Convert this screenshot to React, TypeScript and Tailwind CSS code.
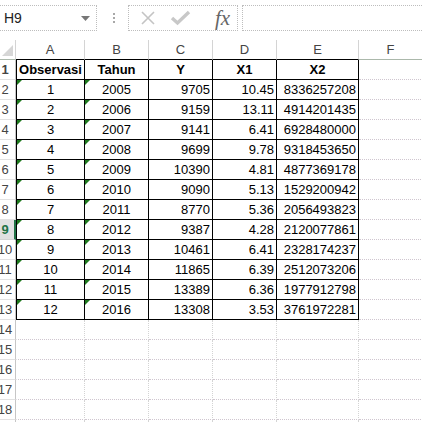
import React from 'react';

const rows = [
    [1, 2005, 9705, '10.45', '8336257208'],
    [2, 2006, 9159, '13.11', '4914201435'],
    [3, 2007, 9141, '6.41', '6928480000'],
    [4, 2008, 9699, '9.78', '9318453650'],
    [5, 2009, 10390, '4.81', '4877369178'],
    [6, 2010, 9090, '5.13', '1529200942'],
    [7, 2011, 8770, '5.36', '2056493823'],
    [8, 2012, 9387, '4.28', '2120077861'],
    [9, 2013, 10461, '6.41', '2328174237'],
    [10, 2014, 11865, '6.39', '2512073206'],
    [11, 2015, 13389, '6.36', '1977912798'],
    [12, 2016, 13308, '3.53', '3761972281'],
];

const Flag = () => (
    <span className="absolute left-0 top-0 w-0 h-0 border-t-[5px] border-r-[5px] border-t-[#1f7a1f] border-r-transparent" />
);

const RowHead = ({ n, selected }: { n: number; selected?: boolean }) => (
    <div
        className={
            selected
                ? 'w-[16px] h-full shrink-0 overflow-hidden border-r-2 border-r-[#217346] bg-[#e1e1e1] border-b border-b-[#d4d4d4]'
                : 'w-[16px] h-full shrink-0 overflow-hidden border-r border-r-[#c6c6c6] border-b border-b-[#e2e2e2]'
        }
    >
        <div
            className={
                selected
                    ? 'w-[26px] -ml-[8px] h-full flex items-center justify-center text-[13px] font-bold text-[#217346]'
                    : 'w-[26px] -ml-[8px] h-full flex items-center justify-center text-[13px] text-[#444]'
            }
        >
            {n}
        </div>
    </div>
);

export default function App() {
    return (
        <div className="w-[422px] h-[422px] overflow-hidden bg-white text-black" style={{ fontFamily: '"Liberation Sans", Arial, sans-serif' }}>
            {/* formula bar */}
            <div className="h-[40px] flex items-start pt-[5px]">
                <div className="-ml-[1px] w-[98px] h-[26px] border border-dotted border-[#bdbdbd] flex items-center justify-between pl-[4px] pr-[6px]">
                    <span className="text-[14px] text-[#222]">H9</span>
                    <svg width="9" height="5" viewBox="0 0 9 5">
                        <polygon points="0,0 9,0 4.5,5" fill="#777" />
                    </svg>
                </div>
                <div className="w-[31px] h-[26px] flex flex-col items-center justify-center gap-[2px] pl-[2px]">
                    <span className="w-[2px] h-[2px] bg-[#a8a8a8]" />
                    <span className="w-[2px] h-[2px] bg-[#a8a8a8]" />
                    <span className="w-[2px] h-[2px] bg-[#a8a8a8]" />
                </div>
                <div className="w-[110px] h-[26px] border border-dotted border-[#bdbdbd] flex items-center pl-[11px] gap-[14px]">
                    <svg width="16" height="16" viewBox="0 0 16 16">
                        <path d="M2 2 L14 14 M14 2 L2 14" stroke="#c4c4c4" strokeWidth="1.6" fill="none" />
                    </svg>
                    <svg width="21" height="16" viewBox="0 0 21 16">
                        <path d="M2 8 L7.5 13 L19 2" stroke="#c8c8c8" strokeWidth="3.4" fill="none" />
                    </svg>
                    <span className="ml-[10px] text-[21px] italic text-[#666] leading-none" style={{ fontFamily: '"Liberation Serif", serif' }}>
                        fx
                    </span>
                </div>
                <div className="ml-[4px] flex-1 -mr-[4px] h-[26px] border border-dotted border-[#bdbdbd]" />
            </div>

            {/* column headers */}
            <div className="h-[20px] flex text-[13px] text-[#444]">
                <div className="w-[16px] shrink-0 border-r border-r-[#d4d4d4] border-b border-b-[#abb8ab] flex items-end justify-end pr-[2px] pb-[3px]">
                    <svg width="11" height="11" viewBox="0 0 11 11">
                        <polygon points="11,0 11,11 0,11" fill="#d6d6d6" />
                    </svg>
                </div>
                <div className="w-[69px] shrink-0 border-r border-r-[#d4d4d4] border-b border-b-black flex items-center justify-center">A</div>
                <div className="w-[64px] shrink-0 border-r border-r-[#d4d4d4] border-b border-b-black flex items-center justify-center">B</div>
                <div className="w-[64px] shrink-0 border-r border-r-[#d4d4d4] border-b border-b-black flex items-center justify-center">C</div>
                <div className="w-[64px] shrink-0 border-r border-r-[#d4d4d4] border-b border-b-black flex items-center justify-center">D</div>
                <div className="w-[82px] shrink-0 border-r border-r-[#d4d4d4] border-b border-b-black flex items-center justify-center">E</div>
                <div className="w-[64px] shrink-0 border-r border-r-[#d4d4d4] border-b border-b-[#abb8ab] flex items-center justify-center">F</div>
            </div>

            {/* row 1 */}
            <div className="h-[20px] flex text-[13px] font-bold">
                <RowHead n={1} />
                <div className="w-[69px] shrink-0 border-l border-r border-b border-black flex items-center justify-center">Observasi</div>
                <div className="w-[64px] shrink-0 border-r border-b border-black flex items-center justify-center">Tahun</div>
                <div className="w-[64px] shrink-0 border-r border-b border-black flex items-center justify-center">Y</div>
                <div className="w-[64px] shrink-0 border-r border-b border-black flex items-center justify-center">X1</div>
                <div className="w-[82px] shrink-0 border-r border-b border-black flex items-center justify-center">X2</div>
                <div className="w-[64px] shrink-0 border-r border-r-[#d4d4d4] border-b border-dotted border-b-[#cfc6cf]" />
            </div>

            {rows.map((r, i) => (
                <div key={i} className="h-[20px] flex text-[13px]">
                    <RowHead n={i + 2} selected={i + 2 === 9} />
                    <div className="relative w-[69px] shrink-0 border-l border-r border-b border-black flex items-center justify-center">
                        <Flag />
                        {r[0]}
                    </div>
                    <div className="relative w-[64px] shrink-0 border-r border-b border-black flex items-center justify-center">
                        <Flag />
                        {r[1]}
                    </div>
                    <div className="w-[64px] shrink-0 border-r border-b border-black flex items-center justify-end pr-[2px]">{r[2]}</div>
                    <div className="w-[64px] shrink-0 border-r border-b border-black flex items-center justify-end pr-[2px]">{r[3]}</div>
                    <div className="w-[82px] shrink-0 border-r border-b border-black flex items-center justify-end pr-[2px]">{r[4]}</div>
                    <div className="w-[64px] shrink-0 border-r border-r-[#d4d4d4] border-b border-dotted border-b-[#cfc6cf]" />
                </div>
            ))}

            {[14, 15, 16, 17, 18, 19].map((n) => (
                <div key={n} className="h-[20px] flex">
                    <RowHead n={n} />
                    <div className="w-[69px] shrink-0 border-l border-l-transparent border-r border-r-[#d4d4d4] border-b border-dotted border-b-[#cfc6cf]" />
                    <div className="w-[64px] shrink-0 border-r border-r-[#d4d4d4] border-b border-dotted border-b-[#cfc6cf]" />
                    <div className="w-[64px] shrink-0 border-r border-r-[#d4d4d4] border-b border-dotted border-b-[#cfc6cf]" />
                    <div className="w-[64px] shrink-0 border-r border-r-[#d4d4d4] border-b border-dotted border-b-[#cfc6cf]" />
                    <div className="w-[82px] shrink-0 border-r border-r-[#d4d4d4] border-b border-dotted border-b-[#cfc6cf]" />
                    <div className="w-[64px] shrink-0 border-r border-r-[#d4d4d4] border-b border-dotted border-b-[#cfc6cf]" />
                </div>
            ))}
        </div>
    );
}
